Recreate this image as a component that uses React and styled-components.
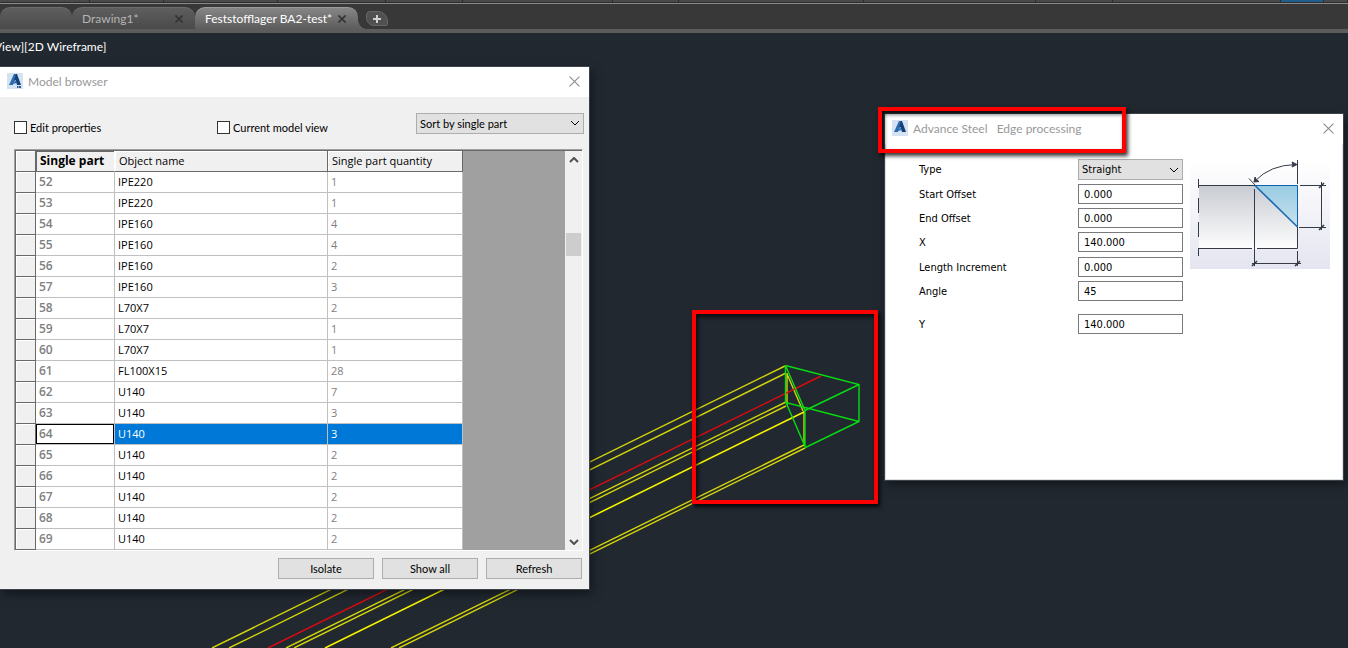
import styled, { createGlobalStyle } from 'styled-components';

const GlobalStyle = createGlobalStyle`
  * {
    box-sizing: border-box;
  }

  body {
    margin: 0;
    background: #212830;
    font-family: 'Open Sans', 'Noto Sans', sans-serif;
    font-size: 11px;
  }

  button, input, select {
    font: inherit;
    color: inherit;
    margin: 0;
  }
`;

const Page = styled.div`
  display: flex;
  flex-direction: column;
  min-height: 100vh;
  overflow: hidden;
`;

/* ---------- top strip and drawing tabs ---------- */

const RibbonEdge = styled.div`
  display: flex;
  height: 4px;
  background: #4a4a4a;
  border-bottom: 1px solid #8a8a8a;
  box-shadow: inset 0 -1px 0 #2e2e2e;
`;

const RibbonPanel = styled.div`
  flex: ${props => props.$size} 1 0;
  height: 2px;
  background: ${props => (props.$active ? '#1f5f8f' : 'transparent')};
  border-right: 1px solid #2a2a2a;
`;

const TabBar = styled.nav`
  display: flex;
  align-items: flex-end;
  height: 29px;
  background: #383838;
  border-bottom: 4px solid #5c5c5c;
`;

const Tab = styled.div`
  position: relative;
  display: flex;
  align-items: center;
  justify-content: space-between;
  width: ${props => props.$width}px;
  height: 22px;
  padding: 0 12px 0 10px;
  color: ${props => (props.$active ? '#ffffff' : '#b4b4b4')};
  background: ${props =>
    props.$active
      ? 'linear-gradient(#868686, #5c5c5c)'
      : 'linear-gradient(#5e5e5e, #4a4a4a)'};
  border-top: 1px solid ${props => (props.$active ? '#9a9a9a' : '#6c6c6c')};
  border-radius: 10px 10px 0 0;
  font-family: Lato, sans-serif;
  font-size: 12px;
  white-space: nowrap;

  /* flared foot on the right side */
  &::after {
    content: '';
    position: absolute;
    left: 100%;
    bottom: 0;
    width: 8px;
    height: 10px;
    background: radial-gradient(
      ellipse 8px 10px at 100% 0,
      transparent 96%,
      ${props => (props.$active ? '#616161' : '#4c4c4c')} 100%
    );
  }
`;

const TabClose = styled.button`
  display: flex;
  padding: 0;
  border: 0;
  background: none;
  color: #333333;
`;

const NewTab = styled.button`
  display: flex;
  align-items: center;
  justify-content: center;
  width: 22px;
  height: 15px;
  margin: 0 0 3px 8px;
  padding: 0;
  border: 1px solid #666666;
  border-radius: 4px 10px 2px 8px;
  background: #505050;
  color: #d0d0d0;
`;

/* ---------- drawing area ---------- */

const Viewport = styled.main`
  position: relative;
  flex: 1;
  overflow: hidden;
  background: #212830;
`;

const ViewLabel = styled.div`
  margin-left: -6px;
  padding-top: 5px;
  line-height: 18px;
  font-family: Lato, sans-serif;
  font-size: 12px;
  color: #ffffff;
`;

const Wireframe = styled.svg`
  position: absolute;
  inset: 0;
  width: 100%;
  height: 100%;
  fill: none;
`;

const Highlight = styled.div`
  position: absolute;
  left: ${props => props.$left}px;
  top: ${props => props.$top}px;
  width: ${props => props.$width}px;
  height: ${props => props.$height}px;
  border: 4px solid #ff0000;
  box-shadow: 2px 3px 4px rgba(0, 0, 0, 0.8), inset 2px 3px 4px rgba(0, 0, 0, 0.7);
  pointer-events: none;
`;

/* ---------- windows ---------- */

const Window = styled.section`
  position: absolute;
  left: ${props => props.$left}px;
  top: ${props => props.$top}px;
  width: ${props => props.$width}px;
  background: ${props => props.$background};
  box-shadow: 0 0 0 1px #3c4249, 2px 4px 10px rgba(0, 0, 0, 0.5);
`;

const TitleBar = styled.header`
  display: flex;
  align-items: center;
  gap: 5px;
  height: 30px;
  padding: 0 9px 2px 7px;
  background: #ffffff;
  color: #999999;
`;

const Title = styled.h1`
  flex: 1;
  margin: 0;
  font-family: Lato, sans-serif;
  font-size: 12px;
  font-weight: 400;
  white-space: pre;
`;

const CloseButton = styled.button`
  display: flex;
  padding: 0;
  border: 0;
  background: none;
  color: #8a8a8a;
`;

const Filters = styled.div`
  display: grid;
  grid-template-columns: 203px 1fr 168px;
  align-items: center;
  height: 52px;
  padding: 0 5px 0 14px;
`;

const CheckLabel = styled.label`
  display: flex;
  align-items: center;
  gap: 3px;
  padding-top: 9px;
  font-family: Lato, sans-serif;
  font-size: 11px;
`;

const Checkbox = styled.input`
  appearance: none;
  width: 13px;
  height: 13px;
  border: 1px solid #333333;
  background: #ffffff;
`;

const SelectBox = styled.div`
  display: grid;
  align-items: center;
  height: 21px;

  > * {
    grid-area: 1 / 1;
  }

  > svg {
    justify-self: end;
    margin-right: 4px;
    pointer-events: none;
  }
`;

const Select = styled.select`
  appearance: none;
  width: 100%;
  height: 21px;
  padding: 0 3px;
  border: 1px solid #adadad;
  border-radius: 0;
  background: #e1e1e1;
  font-family: ${props => props.$font};
  font-size: 11px;
`;

const GridFrame = styled.div`
  display: flex;
  margin: 0 6px 0 14px;
  border: 1px solid #a0a0a0;
  border-right-color: #ffffff;
  border-bottom-color: #ffffff;
  background: #a0a0a0;
`;

const GridBody = styled.div`
  flex: 1;
  border-top: 1px solid #696969;
  border-left: 1px solid #696969;
`;

const PartTable = styled.table`
  width: 447px;
  table-layout: fixed;
  border-collapse: separate;
  border-spacing: 0;
  background: #ffffff;
  line-height: 18px;
`;

const Th = styled.th`
  height: 21px;
  padding: 0 4px;
  background: #f0f0f0;
  border-right: 1px solid #696969;
  border-bottom: 1px solid #696969;
  box-shadow: inset 1px 1px 0 #ffffff;
  font-weight: 400;
  text-align: left;
  white-space: nowrap;
`;

const SortedTh = styled(Th)`
  border-right-color: #ffffff;
  box-shadow: inset 1px 1px 0 #696969;
  font-size: 12px;
  font-weight: 700;
`;

const RowHead = styled.td`
  height: 21px;
  padding: 0;
  background: #f0f0f0;
  border-right: 1px solid #696969;
  border-bottom: 1px solid #696969;
  box-shadow: inset 1px 1px 0 #ffffff;
`;

const Td = styled.td`
  height: 21px;
  padding: 0 3px;
  border-right: 1px solid #c0c0c0;
  border-bottom: 1px solid #c0c0c0;
  color: ${props => (props.$muted ? '#808080' : '#000000')};
  font-size: ${props => (props.$strong ? 12 : 11)}px;
  font-weight: ${props => (props.$strong ? 600 : 400)};

  tr[aria-selected='true'] > & {
    color: ${props => (props.$strong ? '#808080' : '#ffffff')};
    background: ${props => (props.$strong ? '#ffffff' : '#0078d7')};
    box-shadow: ${props => (props.$strong ? 'inset 0 0 0 1px #000000' : 'none')};
  }
`;

const ScrollBar = styled.div`
  display: flex;
  flex-direction: column;
  align-items: center;
  width: 17px;
  padding: 6px 0 5px;
  border-top: 1px solid #696969;
  background: #f0f0f0;
  color: #505050;
`;

const Thumb = styled.div`
  width: 15px;
  height: 23px;
  margin: 70px 0 auto;
  background: #cdcdcd;
`;

const Actions = styled.footer`
  display: flex;
  justify-content: flex-end;
  gap: 8px;
  padding: 7px 7px 10px;
`;

const Button = styled.button`
  width: 96px;
  height: 21px;
  padding: 0;
  border: 1px solid #adadad;
  background: #e1e1e1;
  font-family: Lato, sans-serif;
  font-size: 11px;
`;

/* ---------- edge processing ---------- */

const EdgeBody = styled.div`
  display: flex;
  gap: 7px;
  min-height: 336px;
  padding: 15px 12px 0 33px;
  border: 1px solid #dcdfe3;
  border-top: 0;
`;

const Fields = styled.form`
  flex: 1;
`;

const FIELD_GAPS = { normal: 4, medium: 5, wide: 13 };

const Field = styled.div`
  display: grid;
  grid-template-columns: 1fr 105px;
  align-items: center;
  margin-bottom: ${props => FIELD_GAPS[props.$gap || 'normal']}px;
  font-family: 'DejaVu Sans Condensed', 'DejaVu Sans', sans-serif;
  font-size: 11px;
`;

const TextInput = styled.input`
  width: 100%;
  height: 20px;
  padding: 0 5px;
  border: 1px solid #7a7a7a;
  background: #ffffff;
`;

const Diagram = styled.svg`
  flex: none;
  width: 140px;
  height: 110px;
  margin-top: 1px;
`;

const PARTS = [
  [52, 'IPE220', 1],
  [53, 'IPE220', 1],
  [54, 'IPE160', 4],
  [55, 'IPE160', 4],
  [56, 'IPE160', 2],
  [57, 'IPE160', 3],
  [58, 'L70X7', 2],
  [59, 'L70X7', 1],
  [60, 'L70X7', 1],
  [61, 'FL100X15', 28],
  [62, 'U140', 7],
  [63, 'U140', 3],
  [64, 'U140', 3],
  [65, 'U140', 2],
  [66, 'U140', 2],
  [67, 'U140', 2],
  [68, 'U140', 2],
  [69, 'U140', 2],
];

const SELECTED_PART = 64;

const FIELDS = [
  { id: 'start', label: 'Start Offset', value: '0.000' },
  { id: 'end', label: 'End Offset', value: '0.000' },
  { id: 'x', label: 'X', value: '140.000', gap: 'medium' },
  { id: 'length', label: 'Length Increment', value: '0.000' },
  { id: 'angle', label: 'Angle', value: '45', gap: 'wide' },
  { id: 'y', label: 'Y', value: '140.000' },
];

const PANELS = [90, 73, 114, 108, 77, 150, 66, 186, 172, 77, 168];

function Cross({ size, weight = 1 }) {
  return (
    <svg width={size} height={size} viewBox="0 0 10 10" stroke="currentColor" strokeWidth={weight}>
      <path d="M0.5 0.5 9.5 9.5M9.5 0.5 0.5 9.5" />
    </svg>
  );
}

function Chevron({ up, width = 10, weight = 1 }) {
  return (
    <svg width={width} height="6" viewBox="0 0 10 6" fill="none" stroke="currentColor" strokeWidth={weight}>
      <path d={up ? 'M1 5 5 1 9 5' : 'M1 1 5 5 9 1'} />
    </svg>
  );
}

function AppLogo({ badge }) {
  return (
    <svg width="16" height="16" viewBox="0 0 16 16">
      <rect width="16" height="16" fill="#d5e2f2" />
      <path d="M7 1h3l4 11h-4L8.500 7 6 9z" fill="#163f78" />
      <path d="M7 1h2L6 12H2z" fill="#2b6cb0" />
      <path d="M5 9 9 8l1 2-5 1z" fill="#2b6cb0" />
      {badge && <path d="M10 13h1.500v2H10zM12 13h2v2h-2z" fill="#2b5f9e" />}
    </svg>
  );
}

function Beam() {
  return (
    <Wireframe>
      <g transform="translate(0 -33)">
        <g stroke="#d4d40c" strokeWidth="1.4">
          <path d="M785 366 212 648M786 373 229 648M786 402 286 648M786 406 294 648" />
          <path d="M804 445 391 648M805 448 399 648" />
          <path d="M787 373V405M787 374 803 411M804 411V445" />
        </g>
        <path d="M804 412 325 648" stroke="#f4f400" strokeWidth="1.6" />
        <path d="M821 376 268 648" stroke="#dd0a10" strokeWidth="1.4" />
        <path
          d="M785.5 365.5 859 384.5V421.5L805.5 447.5 786 402.5 859 421.5M785.5 365.5V402.5M785.5 365.5 805 410.5V447.5M805 410.5 859 384.5"
          stroke="#08dc10"
          strokeWidth="1.4"
        />
      </g>
    </Wireframe>
  );
}

function EdgeDiagram() {
  return (
    <Diagram viewBox="0 0 140 110" fill="none">
      <defs>
        <linearGradient id="paper" x1="0" y1="0" x2="0" y2="1">
          <stop offset="0" stopColor="#ffffff" />
          <stop offset="1" stopColor="#e5e5f1" />
        </linearGradient>
        <linearGradient id="steel" x1="0" y1="0" x2="0" y2="1">
          <stop offset="0" stopColor="#c8cbd2" />
          <stop offset="1" stopColor="#fdfdfd" />
        </linearGradient>
        <linearGradient id="cut" x1="0" y1="0" x2="0" y2="1">
          <stop offset="0" stopColor="#98cbe2" />
          <stop offset="1" stopColor="#c8e2ee" />
        </linearGradient>
      </defs>
      <rect width="140" height="109" fill="url(#paper)" />
      <path d="M9 25H108V88H9z" fill="url(#steel)" />
      <path d="M65 25.5H107.5V66.5z" fill="url(#cut)" />
      <path d="M62 88.5H67" stroke="#ffffff" strokeWidth="2" />
      <g stroke="#343a46">
        <path d="M8.5 19V28M8.5 38V53M8.5 62V77M8.5 88V96" />
        <path d="M8.5 25.5H65M8.5 88.5H62M67 88.5H107.5V67M107.5 0V24M107.5 91V106" />
        <path d="M64.5 29V106M62 103.5H111M110 25.5H136M109 67.5H136M131.5 22V70" />
        <path d="M59 18.5 65 25M65 21Q80 5 106 4.5" />
        <path d="M62 106 67 101M105 106 110 101M129 28 134 23M129 70 134 65" strokeWidth="1.6" />
      </g>
      <path d="M64 22 65 17 66.5 20 69 21.5zM107 4.5 102 2 103 4.5 102 7z" fill="#343a46" stroke="#343a46" />
      <path d="M65 25.5H107.5V66.5" stroke="#0d62b0" />
      <path d="M65 25.5 107.5 67" stroke="#1c69b2" strokeWidth="1.6" />
    </Diagram>
  );
}

function ModelBrowser() {
  return (
    <Window $left={0} $top={34} $width={589} $background="#f0f0f0">
      <TitleBar>
        <AppLogo badge />
        <Title>Model browser</Title>
        <CloseButton aria-label="Close model browser">
          <Cross size={11} />
        </CloseButton>
      </TitleBar>
      <Filters>
        <CheckLabel>
          <Checkbox type="checkbox" />
          Edit properties
        </CheckLabel>
        <CheckLabel>
          <Checkbox type="checkbox" />
          Current model view
        </CheckLabel>
        <SelectBox>
          <Select aria-label="Sort order" $font="Lato, sans-serif">
            <option>Sort by single part</option>
          </Select>
          <Chevron />
        </SelectBox>
      </Filters>
      <GridFrame>
        <GridBody>
          <PartTable>
            <colgroup>
              <col width="20" />
              <col width="79" />
              <col width="213" />
              <col width="135" />
            </colgroup>
            <thead>
              <tr>
                <Th />
                <SortedTh>Single part</SortedTh>
                <Th>Object name</Th>
                <Th>Single part quantity</Th>
              </tr>
            </thead>
            <tbody>
              {PARTS.map(([part, name, quantity]) => (
                <tr key={part} aria-selected={part === SELECTED_PART}>
                  <RowHead />
                  <Td $strong $muted>{part}</Td>
                  <Td>{name}</Td>
                  <Td $muted>{quantity}</Td>
                </tr>
              ))}
            </tbody>
          </PartTable>
        </GridBody>
        <ScrollBar>
          <Chevron up weight={2} />
          <Thumb />
          <Chevron weight={2} />
        </ScrollBar>
      </GridFrame>
      <Actions>
        <Button>Isolate</Button>
        <Button>Show all</Button>
        <Button>Refresh</Button>
      </Actions>
    </Window>
  );
}

function EdgeProcessing() {
  return (
    <Window $left={885} $top={81} $width={458} $background="#ffffff">
      <TitleBar>
        <AppLogo />
        <Title>Advance Steel   Edge processing</Title>
        <CloseButton aria-label="Close edge processing">
          <Cross size={11} />
        </CloseButton>
      </TitleBar>
      <EdgeBody>
        <Fields>
          <Field>
            <label htmlFor="type">Type</label>
            <SelectBox>
              <Select id="type" $font="inherit">
                <option>Straight</option>
              </Select>
              <Chevron />
            </SelectBox>
          </Field>
          {FIELDS.map(field => (
            <Field key={field.id} $gap={field.gap}>
              <label htmlFor={field.id}>{field.label}</label>
              <TextInput id={field.id} defaultValue={field.value} />
            </Field>
          ))}
        </Fields>
        <EdgeDiagram />
      </EdgeBody>
    </Window>
  );
}

export default function App() {
  return (
    <Page>
      <GlobalStyle />
      <RibbonEdge>
        {PANELS.map((size, i) => (
          <RibbonPanel key={i} $size={size} />
        ))}
        <RibbonPanel $size={43} $active />
        <RibbonPanel $size={23} />
      </RibbonEdge>
      <TabBar>
        <Tab $width={72} />
        <Tab $width={123}>
          Drawing1*
          <TabClose aria-label="Close Drawing1">
            <Cross size={8} weight={2} />
          </TabClose>
        </Tab>
        <Tab $width={163} $active>
          Feststofflager BA2-test*
          <TabClose aria-label="Close Feststofflager BA2-test">
            <Cross size={8} weight={2} />
          </TabClose>
        </Tab>
        <NewTab aria-label="New drawing">
          <svg width="8" height="8" viewBox="0 0 8 8" stroke="currentColor" strokeWidth="2">
            <path d="M4 0V8M0 4H8" />
          </svg>
        </NewTab>
      </TabBar>
      <Viewport>
        <ViewLabel>View][2D Wireframe]</ViewLabel>
        <Beam />
        <ModelBrowser />
        <EdgeProcessing />
        <Highlight $left={692} $top={277} $width={186} $height={194} />
        <Highlight $left={878} $top={74} $width={248} $height={46} />
      </Viewport>
    </Page>
  );
}
